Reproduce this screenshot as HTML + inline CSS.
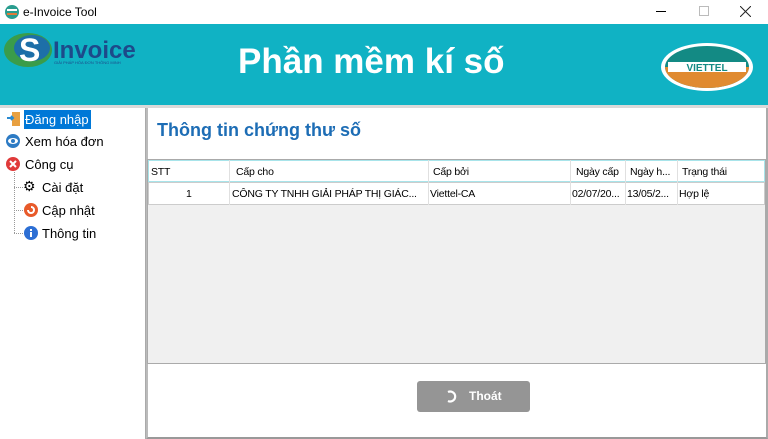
<!DOCTYPE html>
<html><head><meta charset="utf-8"><style>
*{margin:0;padding:0;box-sizing:border-box}
body{width:768px;height:439px;overflow:hidden;background:#f0f0f0;font-family:"Liberation Sans",sans-serif;position:relative;font-size:12px;color:#000}
.abs{position:absolute}
</style></head><body>
<div class="abs" style="left:0;top:0;width:768px;height:24px;background:#fff"></div>
<svg class="abs" style="left:4px;top:4px" width="16" height="16"><circle cx="8" cy="8" r="7" fill="#2a9d8f"/><rect x="3" y="5" width="10" height="2" fill="#fff"/><rect x="3" y="9" width="10" height="2" fill="#e07b39"/></svg>
<div class="abs" style="left:23px;top:5px;font-size:12px">e-Invoice Tool</div>
<div class="abs" style="left:656px;top:11px;width:10px;height:1px;background:#000"></div>
<div class="abs" style="left:699px;top:6px;width:10px;height:10px;border:1px solid #bbb"></div>
<svg class="abs" style="left:740px;top:6px" width="11" height="11"><path d="M0 0L11 11M11 0L0 11" stroke="#222" stroke-width="1"/></svg>
<div class="abs" style="left:0;top:24px;width:768px;height:81px;background:#10b2c4"></div>
<svg class="abs" style="left:2px;top:28px" width="160" height="45">
<ellipse cx="26" cy="22" rx="24" ry="17" fill="#3a9c4a"/><ellipse cx="30" cy="20" rx="18" ry="13" fill="#1d6fa8"/>
<text x="17" y="33" font-family="Liberation Sans" font-weight="bold" font-size="32" fill="#fff">S</text>
<text x="51" y="30" font-family="Liberation Sans" font-weight="bold" font-size="24" fill="#1d4a8a">Invoice</text>
<text x="52" y="36" font-family="Liberation Sans" font-size="4" fill="#1d4a8a">GIẢI PHÁP HÓA ĐƠN THÔNG MINH</text></svg>
<div class="abs" style="left:238px;top:42px;width:276px;color:#fff;font-weight:bold;font-size:35px;white-space:nowrap">Phần mềm kí số</div>
<svg class="abs" style="left:660px;top:42px" width="94" height="50"><ellipse cx="47" cy="25" rx="46" ry="24" fill="#fff"/><ellipse cx="47" cy="25" rx="42" ry="21" fill="#138a84"/><path d="M5 25 A42 21 0 0 0 89 25 Z" fill="#e08a30"/><rect x="8" y="20" width="78" height="10" fill="#fff"/><text x="47" y="29" text-anchor="middle" font-weight="bold" font-size="10" font-family="Liberation Sans" fill="#138a84">VIETTEL</text></svg>
<div class="abs" style="left:0;top:105px;width:768px;height:3px;background:#d9d9d9"></div>
<div class="abs" style="left:0;top:108px;width:146px;height:331px;background:#fff;border-right:1px solid #aaa"></div>
<svg class="abs" style="left:6px;top:111px" width="16" height="16"><rect x="6" y="1" width="8" height="14" fill="#e8a040"/><path d="M1 7h6M5 5l2 2-2 2" stroke="#2a8ad0" stroke-width="2" fill="none"/></svg>
<div class="abs" style="left:24px;top:110px;height:19px;width:67px;background:#0078d7;color:#fff;font-size:13px;line-height:19px;padding-left:1px">Đăng nhập</div>
<svg class="abs" style="left:6px;top:134px" width="14" height="14"><circle cx="7" cy="7" r="7" fill="#2d7bc4"/><ellipse cx="7" cy="7" rx="5" ry="3" fill="#fff"/><circle cx="7" cy="7" r="2" fill="#2d7bc4"/></svg>
<div class="abs" style="left:25px;top:134px;font-size:13px">Xem hóa đơn</div>
<svg class="abs" style="left:6px;top:157px" width="14" height="14"><circle cx="7" cy="7" r="7" fill="#e03a3a"/><path d="M4 4l6 6M10 4l-6 6" stroke="#fff" stroke-width="2"/></svg>
<div class="abs" style="left:25px;top:157px;font-size:13px">Công cụ</div>
<div class="abs" style="left:14px;top:172px;width:1px;height:61px;border-left:1px dotted #999"></div>
<div class="abs" style="left:14px;top:187px;width:9px;border-top:1px dotted #999"></div>
<div class="abs" style="left:14px;top:210px;width:9px;border-top:1px dotted #999"></div>
<div class="abs" style="left:14px;top:233px;width:9px;border-top:1px dotted #999"></div>
<div class="abs" style="left:23px;top:179px;font-size:14px;line-height:14px">⚙</div>
<div class="abs" style="left:42px;top:180px;font-size:13px">Cài đặt</div>
<svg class="abs" style="left:24px;top:203px" width="14" height="14"><circle cx="7" cy="7" r="7" fill="#e85a2a"/><path d="M4 7a3 3 0 1 0 3-3" stroke="#fff" stroke-width="2" fill="none"/></svg>
<div class="abs" style="left:42px;top:203px;font-size:13px">Cập nhật</div>
<svg class="abs" style="left:24px;top:226px" width="14" height="14"><circle cx="7" cy="7" r="7" fill="#2d6fd4"/><rect x="6" y="6" width="2" height="5" fill="#fff"/><rect x="6" y="3" width="2" height="2" fill="#fff"/></svg>
<div class="abs" style="left:42px;top:226px;font-size:13px">Thông tin</div>
<div class="abs" style="left:146px;top:108px;width:622px;height:331px;background:#fff;border-left:2px solid #bbb;border-right:2px solid #aaa;border-bottom:2px solid #999"></div>
<div class="abs" style="left:157px;top:120px;color:#1d6db5;font-weight:bold;font-size:18px">Thông tin chứng thư số</div>
<div class="abs" style="left:147px;top:159px;width:619px;height:205px;background:#f0f0f0;border:1px solid #aaa"></div>
<div class="abs" style="left:148px;top:160px;width:617px;height:22px;background:#fff;border:1px solid #a8e4ea"></div>
<div class="abs" style="left:148px;top:182px;width:617px;height:23px;background:#fff;border:1px solid #ccc"></div>
<div style="font-size:10.5px;letter-spacing:-0.2px">
<div class="abs" style="left:151px;top:166px">STT</div>
<div class="abs" style="left:236px;top:166px">Cấp cho</div>
<div class="abs" style="left:433px;top:166px">Cấp bởi</div>
<div class="abs" style="left:576px;top:166px">Ngày cấp</div>
<div class="abs" style="left:630px;top:166px">Ngày h...</div>
<div class="abs" style="left:682px;top:166px">Trạng thái</div>
<div class="abs" style="left:186px;top:188px">1</div>
<div class="abs" style="left:232px;top:188px">CÔNG TY TNHH GIẢI PHÁP THỊ GIÁC...</div>
<div class="abs" style="left:430px;top:188px">Viettel-CA</div>
<div class="abs" style="left:572px;top:188px">02/07/20...</div>
<div class="abs" style="left:627px;top:188px">13/05/2...</div>
<div class="abs" style="left:679px;top:188px">Hợp lệ</div>
</div>
<div class="abs" style="left:229px;top:160px;width:1px;height:45px;background:#e0e0e0"></div>
<div class="abs" style="left:428px;top:160px;width:1px;height:45px;background:#e0e0e0"></div>
<div class="abs" style="left:570px;top:160px;width:1px;height:45px;background:#e0e0e0"></div>
<div class="abs" style="left:625px;top:160px;width:1px;height:45px;background:#e0e0e0"></div>
<div class="abs" style="left:677px;top:160px;width:1px;height:45px;background:#e0e0e0"></div>
<div class="abs" style="left:417px;top:381px;width:113px;height:31px;background:#959595;border-radius:3px;color:#fff;font-weight:bold;font-size:12px;line-height:31px;padding-left:52px">Thoát</div>
<svg class="abs" style="left:445px;top:389px" width="14" height="15"><path d="M3 3a5 5 0 1 1 0 9" stroke="#fff" stroke-width="2.2" fill="none"/></svg>
</body></html>
